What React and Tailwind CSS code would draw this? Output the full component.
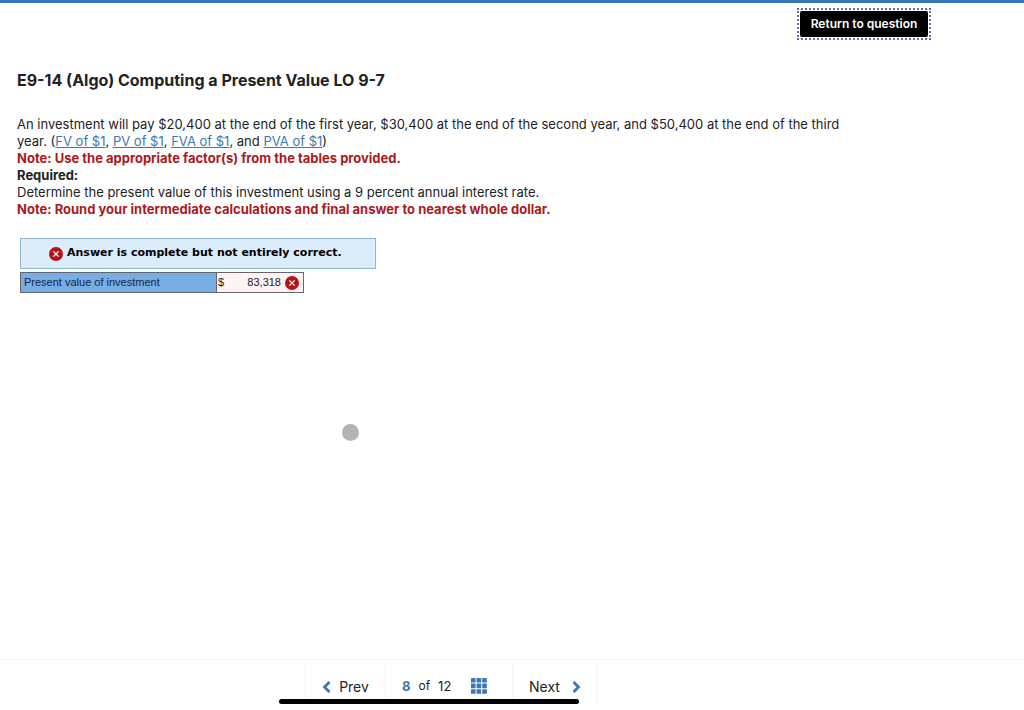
function WrongIcon() {
  return (
    <svg viewBox="0 0 14 14" className="size-3.5 shrink-0" role="img" aria-label="Incorrect">
      <circle cx="7" cy="7" r="7" fill="#b3141b" />
      <path d="M4.4 4.4 9.6 9.6M9.6 4.4 4.4 9.6" stroke="#fff" strokeWidth="1.3" fill="none" />
    </svg>
  );
}

function Chevron({ points }) {
  return (
    <svg viewBox="0 0 9 12" className="h-3 w-[9px]" aria-hidden="true">
      <polyline points={points} fill="none" stroke="#3d76b5" strokeWidth="2.8" />
    </svg>
  );
}

function GridIcon() {
  const cells = [0, 5.6, 11.2];
  return (
    <svg viewBox="0 0 16 16" className="size-4" aria-hidden="true">
      {cells.map((y) =>
        cells.map((x) => (
          <rect key={`${x}-${y}`} x={x} y={y} width="4.6" height="4.6" rx="0.4" fill="#3d76b5" />
        ))
      )}
    </svg>
  );
}

function TableLink({ children }) {
  return (
    <a href="#tables" className="text-[#3d79ad] underline">
      {children}
    </a>
  );
}

export default function App() {
  return (
    <div className="relative flex min-h-screen flex-col border-t-3 border-[#3874b8] bg-white font-['Inter',sans-serif] text-[#222]">
      <header className="flex justify-end pt-[5px] pr-[93px]">
        <div className="border-2 border-dotted border-[#64709c] p-px">
          <button type="button" className="block h-[26px] w-32 rounded-xs bg-black text-xs font-semibold text-white">
            Return to question
          </button>
        </div>
      </header>

      <main className="flex-1 px-[17px] pt-7">
        <h1 className="text-base leading-6 font-bold">E9-14 (Algo) Computing a Present Value LO 9-7</h1>
        <div className="mt-6 max-w-[832px] text-[13px] leading-[17px]">
          <p>
            An investment will pay $20,400 at the end of the first year, $30,400 at the end of the second year, and
            $50,400 at the end of the third year. (<TableLink>FV of $1</TableLink>, <TableLink>PV of $1</TableLink>,{" "}
            <TableLink>FVA of $1</TableLink>, and <TableLink>PVA of $1</TableLink>)
          </p>
          <p className="font-bold text-[#aa1a1c]">Note: Use the appropriate factor(s) from the tables provided.</p>
          <p className="font-bold">Required:</p>
          <p>Determine the present value of this investment using a 9 percent annual interest rate.</p>
          <p className="font-bold text-[#aa1a1c]">
            Note: Round your intermediate calculations and final answer to nearest whole dollar.
          </p>
        </div>

        <div className="mt-5 ml-[3px] flex h-[31px] w-[356px] items-center gap-1 border border-[#91b4d1] bg-[#dbecfa] pl-7 font-['DejaVu_Sans',sans-serif] text-[11px] font-bold text-black">
          <WrongIcon />
          <span>Answer is complete but not entirely correct.</span>
        </div>

        <table className="mt-[3px] ml-[3px] w-[284px] table-fixed border-collapse font-['Liberation_Sans',sans-serif] text-[11px] leading-[19px]">
          <tbody>
            <tr>
              <th scope="row" className="w-[196px] border border-[#66666e] bg-[#78ace5] px-[3px] text-left font-normal text-[#182640]">
                Present value of investment
              </th>
              <td className="border border-[#66666e] bg-[#fff2f2] pr-1 pl-px">
                <div className="flex items-center">
                  <span>$</span>
                  <span className="mr-1 ml-auto">83,318</span>
                  <WrongIcon />
                </div>
              </td>
            </tr>
          </tbody>
        </table>
      </main>

      <footer className="border-t border-[#f1f1f1] pt-1 pb-1.5">
        <nav aria-label="Questions" className="ml-[305px] flex h-10 text-sm">
          <button type="button" className="flex w-20 items-center justify-center gap-2 border-l border-[#f4f4f4] pt-1.5">
            <Chevron points="7.5,1 2.5,6 7.5,11" />
            Prev
          </button>
          <div className="flex w-[127px] items-center border-l border-[#f4f4f4] pt-1 pl-4 text-[13px]">
            <span className="font-bold text-[#3d76b5]">8</span>
            <span className="mx-2 text-xs">of</span>
            <span>12</span>
            <button type="button" aria-label="Question list" className="ml-5">
              <GridIcon />
            </button>
          </div>
          <button type="button" className="flex w-[86px] items-center justify-center gap-3 border-x border-[#f4f4f4] pt-1.5">
            Next
            <Chevron points="1.5,1 6.5,6 1.5,11" />
          </button>
        </nav>
      </footer>

      <div className="absolute top-[421px] left-[342px] size-[17px] rounded-full bg-[#b3b3b3]" />
      <div className="absolute bottom-1.5 left-[279px] h-[5px] w-[300px] rounded-full bg-black" />
    </div>
  );
}
